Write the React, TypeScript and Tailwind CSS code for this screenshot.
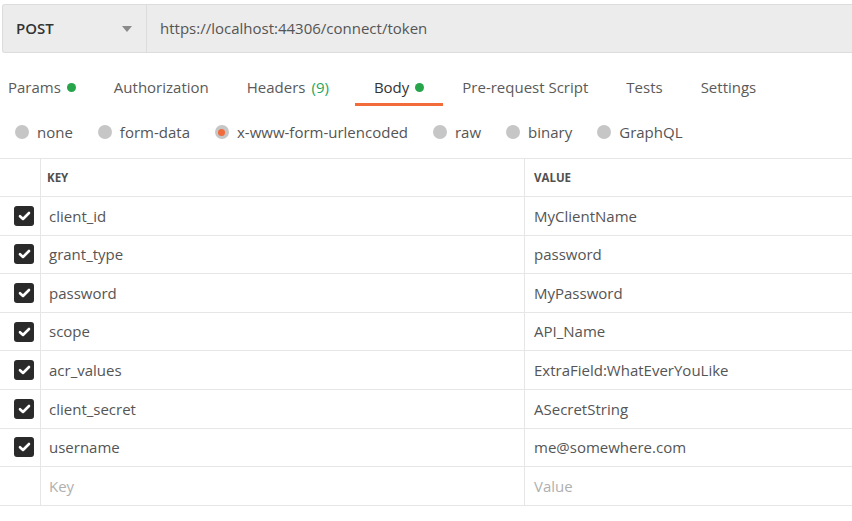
import React from "react";

const rows: [string, string][] = [
  ["client_id", "MyClientName"],
  ["grant_type", "password"],
  ["password", "MyPassword"],
  ["scope", "API_Name"],
  ["acr_values", "ExtraField:WhatEverYouLike"],
  ["client_secret", "ASecretString"],
  ["username", "me@somewhere.com"],
];

const tabs = [
  { label: "Params", dot: true },
  { label: "Authorization" },
  { label: "Headers", count: "(9)" },
  { label: "Body", dot: true, active: true },
  { label: "Pre-request Script" },
  { label: "Tests" },
  { label: "Settings" },
];

const bodyTypes = ["none", "form-data", "x-www-form-urlencoded", "raw", "binary", "GraphQL"];

function Check() {
  return (
    <span className="flex h-[20px] w-[20px] items-center justify-center rounded-[3px] bg-[#2a2a2a]">
      <svg width="13" height="10" viewBox="0 0 13 10" fill="none">
        <path d="M2 5.2 L5 8 L11 2" stroke="white" strokeWidth="2.6" strokeLinecap="round" strokeLinejoin="round" />
      </svg>
    </span>
  );
}

export default function App() {
  return (
    <div className="h-[521px] w-[852px] overflow-hidden bg-white text-[15px] text-[#555]" style={{ fontFamily: '"Open Sans", "Noto Sans", sans-serif' }}>
      {/* URL bar */}
      <div className="ml-[2px] mt-[4px] flex h-[49px] rounded-l-[3px] border border-r-0 border-[#dcdcdc] bg-[#ececec]">
        <div className="flex w-[144px] items-center justify-between border-r border-[#dcdcdc] pl-[13px] pr-[14px]">
          <span className="text-[15px] font-semibold text-[#333]">POST</span>
          <svg width="10" height="6" viewBox="0 0 10 6">
            <path d="M0 0 H10 L5 6 Z" fill="#8a8a8a" />
          </svg>
        </div>
        <div className="flex items-center pl-[13px] text-[#555]">https://localhost:44306/connect/token</div>
      </div>

      {/* Tabs */}
      <div className="mt-[18px] flex h-[35px] items-stretch pl-[8px]">
        {tabs.map((t, i) => (
          <div
            key={t.label}
            className={`flex items-center gap-[6px] border-b-[3px] ${i === 0 ? "pr-[19px]" : "px-[19px]"} ${t.label === "Headers" ? "mr-[7px]" : ""} ${t.active ? "border-[#f26b3a] text-[#333]" : "border-transparent text-[#5a5a5a]"}`}
          >
            <span>{t.label}</span>
            {t.count && <span className="text-[#26a65b]">{t.count}</span>}
            {t.dot && <span className="h-[9px] w-[9px] rounded-full bg-[#26a54a]" />}
          </div>
        ))}
      </div>

      {/* Body type radios */}
      <div className="flex h-[52px] items-center gap-[25px] pl-[15px]">
        {bodyTypes.map((b) => {
          const sel = b === "x-www-form-urlencoded";
          return (
            <div key={b} className="flex items-center gap-[8px]">
              <span className="flex h-[14px] w-[14px] items-center justify-center rounded-full bg-[#c6c6c6]">
                {sel && <span className="h-[7px] w-[7px] rounded-full bg-[#f26b3a]" />}
              </span>
              <span className="text-[#555]">{b}</span>
            </div>
          );
        })}
      </div>

      {/* Table */}
      <div className="border-t border-[#e6e6e6]">
        <div className="flex h-[38px] border-b border-[#e6e6e6]">
          <div className="w-[41px] shrink-0 border-r border-[#e6e6e6]" />
          <div className="flex w-[484px] shrink-0 items-center border-r border-[#e6e6e6] pl-[6px] text-[11.5px] font-bold text-[#505050]">KEY</div>
          <div className="flex flex-1 items-center pl-[9px] text-[11.5px] font-bold text-[#505050]">VALUE</div>
        </div>
        {rows.map(([k, v]) => (
          <div key={k} className="flex h-[38.6px] border-b border-[#e6e6e6]">
            <div className="flex w-[41px] shrink-0 items-center border-r border-[#e6e6e6] pl-[14px]">
              <Check />
            </div>
            <div className="flex w-[484px] shrink-0 items-center border-r border-[#e6e6e6] pl-[8px]">{k}</div>
            <div className="flex flex-1 items-center pl-[9px]">{v}</div>
          </div>
        ))}
        <div className="flex h-[38.6px] border-b border-[#e6e6e6] text-[#b0b0b0]">
          <div className="w-[41px] shrink-0 border-r border-[#e6e6e6]" />
          <div className="flex w-[484px] shrink-0 items-center border-r border-[#e6e6e6] pl-[8px]">Key</div>
          <div className="flex flex-1 items-center pl-[9px]">Value</div>
        </div>
      </div>
    </div>
  );
}
